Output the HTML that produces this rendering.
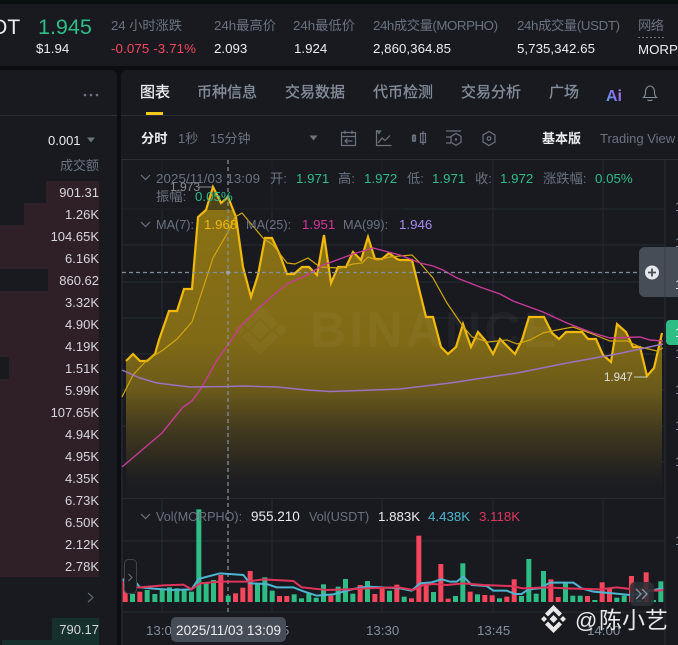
<!DOCTYPE html>
<html><head><meta charset="utf-8">
<style>
html,body{margin:0;padding:0;background:#0b0e11;width:678px;height:645px;overflow:hidden}
svg{display:block}
text{font-family:"Liberation Sans","Noto Sans CJK SC",sans-serif;font-size:13.3px}
.g{fill:#6b7280}.w{fill:#eaecef}.up{fill:#2ebd85}.dn{fill:#f6465d}
.t{font-size:15px;fill:#848e9c;stroke:#848e9c;stroke-width:.3}
.r{text-anchor:end;fill:#d5d7db;font-size:13px}
.ic{fill:none;stroke:#6b7280;stroke-width:1.2}
.gr{stroke:#252932;stroke-width:1}
.ax{fill:#848e9c;font-size:13.3px}
</style></head><body>
<svg width="678" height="645" viewBox="0 0 678 645" xmlns="http://www.w3.org/2000/svg">
<defs>
<linearGradient id="fa" gradientUnits="userSpaceOnUse" x1="0" y1="187" x2="0" y2="495">
<stop offset="0" stop-color="#8a7214"/><stop offset=".5" stop-color="#806a16"/><stop offset=".66" stop-color="#6a5a1a"/><stop offset=".79" stop-color="#41391f"/><stop offset=".95" stop-color="#1e1e21"/><stop offset="1" stop-color="#1a1c21"/>
</linearGradient>
<linearGradient id="ai" x1="0" y1="1" x2="1" y2="0"><stop offset="0" stop-color="#4fb8e0"/><stop offset=".6" stop-color="#8a6cf0"/><stop offset="1" stop-color="#c48ae8"/></linearGradient>
</defs>
<rect width="678" height="645" fill="#0b0e11"/>
<!-- top bar -->
<rect x="0" y="4" width="678" height="62" fill="#181a20"/>
<text x="-9" y="34" class="w" style="font-size:21px;font-weight:500">OT</text>
<text x="38" y="34" class="up" style="font-size:21.500px;font-weight:500">1.945</text>
<text x="36" y="53" class="w">$1.94</text>
<text x="111" y="30" class="g" textLength="71">24 小时涨跌</text>
<text x="111" y="53" class="dn" textLength="85">-0.075 -3.71%</text>
<text x="214" y="30" class="g" textLength="62">24h最高价</text>
<text x="214" y="53" class="w">2.093</text>
<text x="293" y="30" class="g" textLength="62">24h最低价</text>
<text x="294" y="53" class="w">1.924</text>
<text x="373" y="30" class="g" textLength="125">24h成交量(MORPHO)</text>
<text x="373" y="53" class="w" textLength="78">2,860,364.85</text>
<text x="517" y="30" class="g" textLength="103">24h成交量(USDT)</text>
<text x="517" y="53" class="w" textLength="78">5,735,342.65</text>
<text x="638" y="30" class="g" textLength="26">网络</text>
<line x1="638" y1="37.500" x2="664" y2="37.500" stroke="#6b7280" stroke-dasharray="2 2"/>
<text x="638" y="54" class="w">MORPHO</text>

<!-- left panel -->
<path d="M0 70H111a6 6 0 0 1 6 6V645H0Z" fill="#181a20"/>
<line x1="0" y1="115.500" x2="117" y2="115.500" stroke="#2b2f36"/>
<circle cx="85" cy="95" r="1.300" fill="#6b7280"/><circle cx="91" cy="95" r="1.300" fill="#6b7280"/><circle cx="97" cy="95" r="1.300" fill="#6b7280"/>
<text x="48" y="145" class="w" style="font-size:13px">0.001</text>
<path d="M87 137.500h8l-4 5z" fill="#6b7280"/>
<text x="99" y="170" class="g" text-anchor="end" style="font-size:13px">成交额</text>
<rect x="0" y="181" width="99" height="396" fill="#2f1f26"/>
<rect x="0" y="181" width="46" height="22" fill="#181a20"/>
<rect x="0" y="203" width="24" height="22" fill="#181a20"/>
<rect x="0" y="269" width="48" height="22" fill="#181a20"/>
<rect x="0" y="357" width="9" height="22" fill="#181a20"/>
<text x="99" y="197" class="r">901.31</text>
<text x="99" y="219" class="r">1.26K</text>
<text x="99" y="241" class="r">104.65K</text>
<text x="99" y="263" class="r">6.16K</text>
<text x="99" y="285" class="r">860.62</text>
<text x="99" y="307" class="r">3.32K</text>
<text x="99" y="329" class="r">4.90K</text>
<text x="99" y="351" class="r">4.19K</text>
<text x="99" y="373" class="r">1.51K</text>
<text x="99" y="395" class="r">5.99K</text>
<text x="99" y="417" class="r">107.65K</text>
<text x="99" y="439" class="r">4.94K</text>
<text x="99" y="461" class="r">4.95K</text>
<text x="99" y="483" class="r">4.35K</text>
<text x="99" y="505" class="r">6.73K</text>
<text x="99" y="527" class="r">6.50K</text>
<text x="99" y="549" class="r">2.12K</text>
<text x="99" y="571" class="r">2.78K</text>
<path d="M88 593l5 4.500-5 4.500" fill="none" stroke="#5e6673" stroke-width="1.200"/>
<rect x="52" y="618" width="47" height="22" fill="#15302d"/>
<rect x="2" y="640" width="97" height="5" fill="#15302d"/>
<text x="99" y="634" class="r">790.17</text>

<!-- right panel -->
<path d="M127 70H678V645H121V76a6 6 0 0 1 6-6Z" fill="#181a20"/>
<line x1="121" y1="115.500" x2="678" y2="115.500" stroke="#2b2f36"/>
<text x="140" y="97" class="t" style="fill:#eaecef;stroke:#eaecef">图表</text>
<rect x="146" y="112" width="17" height="3" fill="#f0c91a"/>
<text x="197" y="97" class="t">币种信息</text>
<text x="285" y="97" class="t">交易数据</text>
<text x="373" y="97" class="t">代币检测</text>
<text x="461" y="97" class="t">交易分析</text>
<text x="549" y="97" class="t">广场</text>
<text x="606" y="101" style="font-size:16px;font-weight:700" fill="url(#ai)">Ai</text>
<path d="M643.500 97.500c1.800-1.500 2-3.500 2-5.500 0-3.500 2-6 4.500-6s4.500 2.500 4.500 6c0 2 .2 4 2 5.500zM647.500 99.800c1.200 1 3.800 1 5 0" fill="none" stroke="#848e9c" stroke-width="1.100"/>

<text x="141" y="143" class="w" style="font-weight:700;font-size:13.300px">分时</text>
<text x="178" y="143" class="g" style="font-size:13px">1秒</text>
<text x="210" y="143" class="g" style="font-size:13px">15分钟</text>
<path d="M309.500 135.500h8l-4 5z" fill="#6b7280"/>
<!-- toolbar icons -->
<path d="M341.500 132.500h14v13h-14zM341.500 136.500h14M345 130.500v3.500M352 130.500v3.500M352.500 141h-7M347.500 138.500l-2.500 2.500 2.500 2.500" class="ic"/>
<path d="M376.500 130v15.500h15M378 143l4-5 3 2.500 5-5M377 131l3.500 0-1.500 2.500z" class="ic"/>
<path d="M414 134v8M423 131v14M412.500 135.500h3v5.500h-3zM420.500 133.500h5v9h-5z" class="ic"/>
<path d="M446 131h15M446 137h5M446 143h5" class="ic"/><path d="M456 133.500l5 2.900v6l-5 2.900-5-2.900v-6z" class="ic"/><circle cx="456" cy="139.500" r="1.200" fill="#6b7280"/>
<path d="M489 131.500l6 3.500v7l-6 3.500-6-3.500v-7z" class="ic"/><circle cx="489" cy="138.500" r="1.800" class="ic"/>
<text x="542" y="143" class="w" style="font-weight:700;font-size:13px">基本版</text>
<text x="600" y="143" class="g" style="font-size:13px">Trading View</text>
<line x1="121" y1="159.500" x2="678" y2="159.500" stroke="#2b2f36"/>

<!-- grid -->
<g class="gr">
<path d="M122 209H665M122 245H665M122 282H665M122 318H665M122 354H665M122 390H665M122 426H665M122 462H665M122 498.500H665M122 541H665M122 612H665" fill="none"/>
<path d="M162 160V612M272 160V612M382 160V612M493 160V612M603 160V612" fill="none"/>
</g>
<line x1="122" y1="160" x2="122" y2="645" stroke="#2b2f36"/>
<line x1="665" y1="160" x2="665" y2="645" stroke="#2b2f36"/>

<!-- area -->
<polygon fill="url(#fa)" points="126,361 133,354 140,361 147,361 155,354 159,340 169,311 177,311 184,289 192,289 198,217 206,210 213,187 221,203 228,197 236,217 243,267 251,297 258,275 265,238 272,238 280,255 287,274 294,274 302,267 309,267 317,275 324,235 331,283 338,267 346,267 353,252 361,260 368,237 375,259 382,259 389,253 397,259 400,260 412,260 426,317 433,317 441,347 448,354 456,347 463,324 471,347 478,332 485,340 493,354 500,339 508,347 515,354 522,340 529,317 544,317 552,333 559,339 566,332 582,332 588,339 596,339 603,355 611,362 617,324 626,332 633,347 640,347 647,376 654,368 662,333 662,498 126,498"/>
<!-- watermark -->
<g fill="#ffffff" opacity=".03">
<path d="M260 320l10 10-10 10-10-10zM260 305l18 18-6 6-12-12-12 12-6-6zM260 355l-18-18 6-6 12 12 12-12 6 6zM233 330l6-6 6 6-6 6zM275 330l6-6 6 6-6 6z"/>
<text x="310" y="347" textLength="247" style="font-size:50px;font-weight:700">BINANCE</text>
</g>
<!-- legend overlay -->
<rect x="123" y="160" width="280" height="50" fill="#181a20" opacity=".5"/>
<!-- price line -->
<polyline fill="none" stroke="#f0b90b" stroke-width="2.200" stroke-linejoin="miter" points="126,361 133,354 140,361 147,361 155,354 159,340 169,311 177,311 184,289 192,289 198,217 206,210 213,187 221,203 228,197 236,217 243,267 251,297 258,275 265,238 272,238 280,255 287,274 294,274 302,267 309,267 317,275 324,235 331,283 338,267 346,267 353,252 361,260 368,237 375,259 382,259 389,253 397,259 400,260 412,260 426,317 433,317 441,347 448,354 456,347 463,324 471,347 478,332 485,340 493,354 500,339 508,347 515,354 522,340 529,317 544,317 552,333 559,339 566,332 582,332 588,339 596,339 603,355 611,362 617,324 626,332 633,347 640,347 647,376 654,368 662,333"/>
<!-- MA7 -->
<polyline fill="none" stroke="#d1a50e" stroke-width="1.200" points="122,397 133,375 147,360 163,350 177,339 192,322 213,258 228,232 235,217 242,213 263,238 273,245 287,263 295,264 308,258 320,267 340,268 353,264 362,263 368,257 377,260 390,257 400,256 412,255 420,263 433,278 447,303 462,325 472,337 488,342 507,340 517,344 530,340 543,333 557,330 573,327 590,333 610,341 627,341 640,347 657,351 663,348"/>
<!-- MA25 -->
<polyline fill="none" stroke="#c93a97" stroke-width="1.400" points="122,467 142,450 162,433 183,407 192,401 202,387 217,360 228,345 240,327 260,307 277,292 287,284 307,275 323,265 337,260 353,254 373,248 400,255 420,263 433,266 443,270 457,278 480,287 500,294 513,301 543,312 567,323 593,333 610,338 640,337 650,340 663,341"/>
<!-- MA99 -->
<polyline fill="none" stroke="#9a72bf" stroke-width="1.500" points="122,370 140,378 157,383 190,387 228,386.500 243,386 277,387 307,390 330,391.500 360,390.500 400,389 450,383 483,378 517,373 567,363 617,354 663,344"/>
<!-- crosshair -->
<line x1="228" y1="160" x2="228" y2="612" stroke="#848e9c" stroke-width="1.300" stroke-dasharray="4 3"/>
<line x1="122" y1="272.500" x2="640" y2="272.500" stroke="#848e9c" stroke-width="1.300" stroke-dasharray="4 3"/>
<circle cx="228" cy="272.500" r="2" fill="#9aa3b0"/>

<!-- legend text -->
<path d="M141 175l4.500 4.500 4.500-4.500M141 222l4.500 4.500 4.500-4.500M141 514l4.500 4.500 4.500-4.500" fill="none" stroke="#6b7280" stroke-width="1.200"/>
<text x="156" y="183" class="g" textLength="104">2025/11/03 13:09</text>
<text x="270" y="183" class="g">开:</text><text x="296" y="183" class="up">1.971</text>
<text x="338" y="183" class="g">高:</text><text x="364" y="183" class="up">1.972</text>
<text x="407" y="183" class="g">低:</text><text x="432" y="183" class="up">1.971</text>
<text x="475" y="183" class="g">收:</text><text x="500" y="183" class="up">1.972</text>
<text x="543" y="183" class="g">涨跌幅:</text><text x="595" y="183" class="up">0.05%</text>
<text x="156" y="201" class="g">振幅:</text><text x="195" y="201" class="up">0.05%</text>
<text x="170" y="191" fill="#8a8d92" style="font-size:12px">1.973</text><line x1="199" y1="187" x2="212" y2="187" stroke="#8a8d92"/>
<text x="156" y="229" class="g" style="font-size:12.700px">MA(7):</text><text x="204" y="229" fill="#f0b90b">1.968</text>
<text x="246" y="229" class="g" style="font-size:12.700px">MA(25):</text><text x="302" y="229" fill="#d6369a">1.951</text>
<text x="343" y="229" class="g" style="font-size:12.700px">MA(99):</text><text x="399" y="229" fill="#a78bf0">1.946</text>
<text x="604" y="381" fill="#e0e0e0" style="font-size:11.500px">1.947</text><line x1="634" y1="377" x2="647" y2="377" stroke="#c8c8c8"/>

<!-- right axis -->
<g>
<text x="675" y="211" fill="#848e9c">1</text><text x="675" y="247" fill="#848e9c">1</text><text x="675" y="358" fill="#848e9c">1</text><text x="675" y="394" fill="#848e9c">1</text><text x="675" y="430" fill="#848e9c">1</text><text x="675" y="466" fill="#848e9c">1</text><text x="675" y="545" fill="#848e9c">1</text>
</g>
<!-- plus box -->
<rect x="639" y="247" width="50" height="50" rx="6" fill="#474d57"/>
<circle cx="652" cy="272.500" r="7" fill="#e6e8ea"/><path d="M648 272.500h8M652 268.500v8" stroke="#474d57" stroke-width="1.800"/>
<line x1="665" y1="247" x2="665" y2="297" stroke="#3a3f48"/>
<text x="675" y="289" fill="#eaecef">1</text>
<rect x="666" y="320" width="20" height="25" rx="4" fill="#2ebd85"/>
<text x="675" y="337" fill="#fff">1</text>

<!-- volume bars -->
<g transform="translate(120 500) scale(.33333)">
<g fill="#f6465d">
<rect x="8" y="235" width="15" height="71"/><rect x="52" y="275" width="15" height="31"/><rect x="295" y="225" width="15" height="81"/><rect x="339" y="280" width="15" height="26"/><rect x="361" y="263" width="15" height="43"/><rect x="383" y="213" width="15" height="93"/><rect x="471" y="288" width="15" height="18"/><rect x="493" y="288" width="15" height="18"/><rect x="625" y="287" width="15" height="19"/><rect x="713" y="255" width="15" height="51"/><rect x="757" y="282" width="15" height="24"/><rect x="779" y="262" width="15" height="44"/><rect x="823" y="254" width="15" height="52"/>
</g>
<g fill="#2ebd85">
<rect x="30" y="282" width="15" height="24"/><rect x="74" y="270" width="15" height="36"/><rect x="97" y="282" width="15" height="24"/><rect x="119" y="265" width="15" height="41"/><rect x="141" y="262" width="15" height="44"/><rect x="163" y="265" width="15" height="41"/><rect x="185" y="268" width="15" height="38"/><rect x="207" y="275" width="15" height="31"/><rect x="229" y="28" width="15" height="278"/><rect x="251" y="250" width="15" height="56"/><rect x="273" y="240" width="15" height="66"/><rect x="317" y="287" width="15" height="19"/><rect x="405" y="250" width="15" height="56"/><rect x="427" y="232" width="15" height="74"/><rect x="449" y="272" width="15" height="34"/><rect x="515" y="283" width="15" height="23"/><rect x="537" y="295" width="15" height="11"/><rect x="559" y="278" width="15" height="28"/><rect x="581" y="293" width="15" height="13"/><rect x="603" y="253" width="15" height="53"/><rect x="647" y="260" width="15" height="46"/><rect x="669" y="237" width="15" height="69"/><rect x="691" y="281" width="15" height="25"/><rect x="735" y="243" width="15" height="63"/><rect x="801" y="272" width="15" height="34"/>
</g>
<polyline fill="none" stroke="#4db6d1" stroke-width="6" points="8,240 30,240 50,250 60,262 100,266 160,270 215,268 235,237 300,220 370,225 390,250 440,252 470,262 520,262 545,272 590,287 640,283 700,267 740,260 840,265"/>
<polyline fill="none" stroke="#e0355b" stroke-width="6" points="8,262 60,262 130,256 190,254 215,268 240,250 300,245 380,245 430,238 520,243 545,262 620,270 680,268 740,265 840,262"/>
</g>
<g transform="translate(400 500) scale(.33333)">
<g fill="#f6465d">
<rect x="27" y="295" width="15" height="11"/><rect x="49" y="107" width="15" height="199"/><rect x="71" y="255" width="15" height="51"/><rect x="115" y="192" width="15" height="114"/><rect x="137" y="296" width="15" height="10"/><rect x="203" y="275" width="15" height="31"/><rect x="247" y="285" width="15" height="21"/><rect x="269" y="286" width="15" height="20"/><rect x="313" y="290" width="15" height="16"/><rect x="335" y="238" width="15" height="68"/><rect x="445" y="238" width="15" height="68"/><rect x="467" y="291" width="15" height="15"/><rect x="555" y="288" width="15" height="18"/><rect x="599" y="247" width="15" height="59"/><rect x="621" y="265" width="15" height="41"/><rect x="687" y="228" width="15" height="78"/><rect x="731" y="217" width="15" height="89"/>
</g>
<g fill="#2ebd85">
<rect x="5" y="290" width="15" height="16"/><rect x="93" y="276" width="15" height="30"/><rect x="159" y="288" width="15" height="18"/><rect x="181" y="190" width="15" height="116"/><rect x="225" y="283" width="15" height="23"/><rect x="291" y="295" width="15" height="11"/><rect x="357" y="288" width="15" height="18"/><rect x="379" y="177" width="15" height="129"/><rect x="401" y="281" width="15" height="25"/><rect x="423" y="213" width="15" height="93"/><rect x="489" y="250" width="15" height="56"/><rect x="511" y="287" width="15" height="19"/><rect x="533" y="287" width="15" height="19"/><rect x="577" y="300" width="15" height="6"/><rect x="643" y="293" width="15" height="13"/><rect x="665" y="287" width="15" height="19"/><rect x="709" y="300" width="15" height="6"/><rect x="753" y="300" width="15" height="6"/><rect x="775" y="244" width="15" height="62"/>
</g>
<polyline fill="none" stroke="#4db6d1" stroke-width="6" points="0,265 35,272 60,250 95,247 125,238 150,245 170,245 190,230 215,255 260,258 280,272 320,272 345,282 365,282 385,268 420,265 450,248 520,248 545,265 580,275 640,280 690,285 720,282 770,268 790,265"/>
<polyline fill="none" stroke="#e0355b" stroke-width="6" points="0,263 40,270 70,255 100,252 140,255 190,250 250,255 330,258 370,265 440,262 500,265 600,268 650,262 700,268 770,272 790,270"/>
</g>

<!-- vol legend -->
<text x="156" y="521" class="g" style="font-size:12.600px">Vol(MORPHO):</text><text x="251" y="521" class="w" style="font-size:13.500px">955.210</text>
<text x="309" y="521" class="g" style="font-size:12.600px">Vol(USDT)</text><text x="378" y="521" class="w">1.883K</text>
<text x="428" y="521" fill="#4db6d1">4.438K</text>
<text x="479" y="521" fill="#e0355b">3.118K</text>

<!-- handles -->
<rect x="124.500" y="559.500" width="12" height="34" rx="4" fill="#181a20" stroke="#3d424b"/>
<path d="M128.500 574l3.500 3.500-3.500 3.500" fill="none" stroke="#6b7280"/>
<rect x="630" y="582" width="24" height="24" rx="5" fill="#2b2f36" opacity=".88"/>
<path d="M636 589l5 5-5 5M642 589l5 5-5 5" fill="none" stroke="#848e9c" stroke-width="1.400"/>

<!-- time axis -->
<text x="146" y="635" class="ax">13:00</text>
<text x="256" y="635" class="ax">13:15</text>
<text x="366" y="635" class="ax">13:30</text>
<text x="477" y="635" class="ax">13:45</text>
<text x="587" y="635" class="ax">14:00</text>
<rect x="171" y="617" width="115" height="25" rx="5" fill="#474d57"/>
<text x="176" y="635" fill="#eaecef" textLength="105" style="font-size:13.600px">2025/11/03 13:09</text>

<!-- page watermark -->
<g fill="#e8e8e8">
<path d="M553.500 615l4 4-4 4-4-4zM553.500 605l8.500 8.500-3 3-5.500-5.500-5.500 5.500-3-3zM553.500 633l-8.500-8.500 3-3 5.500 5.500 5.500-5.500 3 3zM541 619l3-3 3 3-3 3zM560 619l3-3 3 3-3 3z"/>
<text x="575" y="628" style="font-size:22px">@</text>
<text x="599" y="628" style="font-size:23px">陈小艺</text>
</g>
</svg>
</body></html>
